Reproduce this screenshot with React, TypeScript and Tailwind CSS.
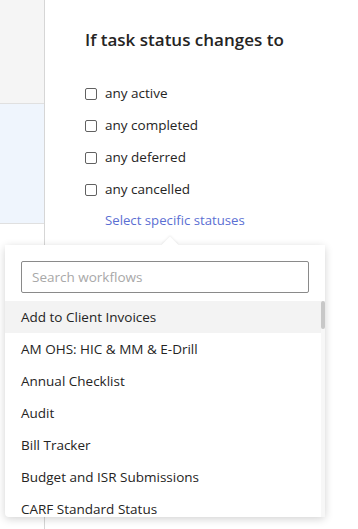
import { useState } from 'react'

const workflows = [
  'Add to Client Invoices',
  'AM OHS: HIC & MM & E-Drill',
  'Annual Checklist',
  'Audit',
  'Bill Tracker',
  'Budget and ISR Submissions',
  'CARF Standard Status',
]

const statuses = ['any active', 'any completed', 'any deferred', 'any cancelled']

export default function App() {
  const [query, setQuery] = useState('')

  return (
    <div
      className="relative flex h-[529px] w-[358px] overflow-hidden bg-white text-[#252423]"
      style={{ fontFamily: '"Open Sans", "Noto Sans", sans-serif' }}
    >
      {/* left sidebar strip */}
      <div className="flex w-[45px] shrink-0 flex-col border-r border-[#d6d6d6]">
        <div className="h-[104px] border-b border-[#e0e0e0] bg-[#f5f5f5]" />
        <div className="h-[120px] border-b border-[#e0e0e0] bg-[#eff5fd]" />
        <div className="flex-1 bg-white" />
      </div>

      {/* status panel */}
      <div className="flex-1 pl-[40px] pt-[28px]">
        <h2 className="text-[17px] font-semibold leading-6">If task status changes to</h2>
        <div className="mt-[32px] flex flex-col gap-[13px]">
          {statuses.map((s) => (
            <label key={s} className="flex h-[19px] items-center gap-[8px] text-[13.5px]">
              <span className="h-[12px] w-[12px] rounded-[2px] border border-[#616161] bg-white" />
              <span>{s}</span>
            </label>
          ))}
        </div>
        <button className="mt-[12px] pl-[20px] text-[13.2px] text-[#5b6fd3]">Select specific statuses</button>
      </div>

      {/* workflow dropdown */}
      <div className="absolute left-[5px] top-[245px] w-[320px] rounded-[4px] bg-white shadow-[0_2px_8px_rgba(0,0,0,0.18)]">
        <div className="absolute -top-[6px] left-[159px] h-[12px] w-[12px] rotate-45 bg-white shadow-[-1px_-1px_2px_rgba(0,0,0,0.06)]" />
        <div className="relative bg-white px-[16px] pb-[8px] pt-[16px]">
          <input
            value={query}
            onChange={(e) => setQuery(e.target.value)}
            placeholder="Search workflows"
            className="h-[32px] w-full rounded-[2px] border border-[#8a8a8a] px-[10px] text-[13.5px] outline-none placeholder:text-[#a8a8a8]"
          />
        </div>
        <div className="relative flex h-[216px] overflow-hidden">
          <ul className="flex-1">
            {workflows.map((w, i) => (
              <li
                key={w}
                className={`flex h-[32px] items-center px-[16px] pt-[1px] text-[13.5px] ${i === 0 ? 'bg-[#f3f3f3]' : ''}`}
              >
                {w}
              </li>
            ))}
          </ul>
          <div className="w-[4px] bg-[#f7f7f7]">
            <div className="h-[28px] rounded-[2px] bg-[#c8c8c8]" />
          </div>
        </div>
      </div>
    </div>
  )
}
